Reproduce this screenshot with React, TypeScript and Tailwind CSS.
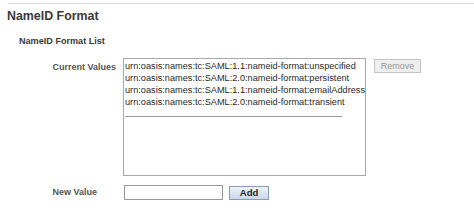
export default function App() {
  const values = [
    "urn:oasis:names:tc:SAML:1.1:nameid-format:unspecified",
    "urn:oasis:names:tc:SAML:2.0:nameid-format:persistent",
    "urn:oasis:names:tc:SAML:1.1:nameid-format:emailAddress",
    "urn:oasis:names:tc:SAML:2.0:nameid-format:transient",
  ];

  return (
    <div
      className="w-[474px] h-[216px] bg-white text-[#333] overflow-hidden"
      style={{ fontFamily: '"Liberation Sans", Arial, sans-serif' }}
    >
      <div className="ml-2 mt-[3px] border-t border-[#dcdcdc]" />
      <h1 className="ml-[7px] mt-[5px] text-[12.4px] leading-[14px] font-bold text-[#3a3a3a]">
        NameID Format
      </h1>
      <h2 className="ml-[19px] mt-[13px] text-[9.1px] leading-[11px] font-bold text-[#3a3a3a]">
        NameID Format List
      </h2>

      <div className="flex mt-[11px]">
        <div className="w-[116px] shrink-0 pt-[4px] text-right text-[9px] leading-[11px] font-bold text-[#555]">
          Current Values
        </div>
        <div className="ml-[7px] shrink-0 w-[243px] h-[118px] border border-[#a9a9a9] pl-[1px] pt-[1px] text-[9.2px] leading-[12px] text-[#2a2a2a]">
          {values.map((v) => (
            <div key={v} className="whitespace-nowrap">
              {v}
            </div>
          ))}
          <div className="mt-[8px] w-[217px] border-t border-[#9a9a9a]" />
        </div>
        <button
          disabled
          className="ml-[8px] mt-[1px] shrink-0 w-[47px] h-[14px] border border-[#c4c4c4] bg-[#eeeeee] text-[9px] leading-[12px] text-[#999]"
        >
          Remove
        </button>
      </div>

      <div className="flex items-center mt-[9px]">
        <div className="w-[97px] shrink-0 text-right text-[9px] leading-[11px] font-bold text-[#555]">
          New Value
        </div>
        <input
          type="text"
          className="ml-[27px] shrink-0 w-[99px] h-[15px] border border-[#999] bg-white outline-none"
        />
        <button className="ml-[6px] shrink-0 w-[40px] h-[14px] border border-[#8a9bb5] bg-gradient-to-b from-[#eef3fa] to-[#c9d8ec] text-[9.5px] leading-[12px] font-bold text-[#222]">
          Add
        </button>
      </div>
    </div>
  );
}
